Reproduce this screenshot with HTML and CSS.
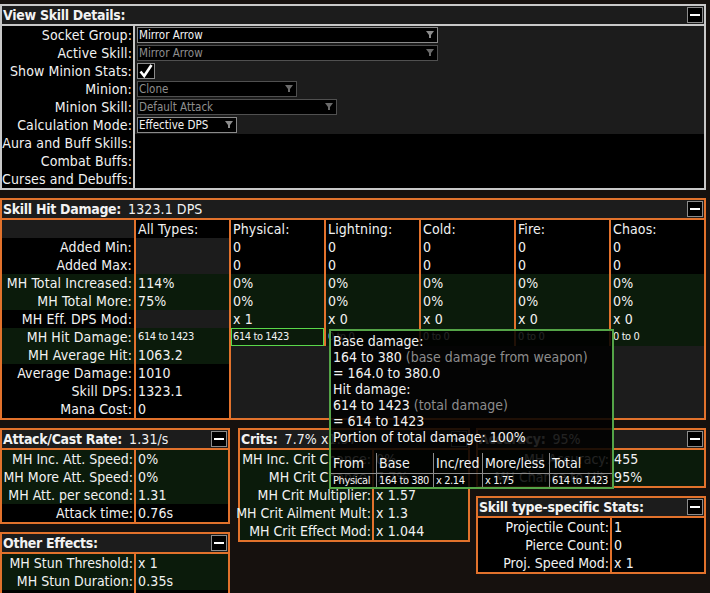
FILE: index.html
```html
<!DOCTYPE html>
<html>
<head>
<meta charset="utf-8">
<link rel="stylesheet" href="styles.css">
</head>
<body>
<div class="page">

  <section class="panel gray">
    <div class="phead"><span class="title">View Skill Details:</span><span class="minbtn"></span></div>
    <div class="form">
      <div class="fl">Socket Group:</div>
      <div class="fv"><div class="dd w301"><span>Mirror Arrow</span><svg class="arr" width="8" height="8" viewBox="0 0 8 8"><polygon points="0,0 8,0 5,4 5,7 3,7 3,4"/></svg></div></div>
      <div class="fl">Active Skill:</div>
      <div class="fv"><div class="dd w301 off"><span>Mirror Arrow</span><svg class="arr" width="8" height="8" viewBox="0 0 8 8"><polygon points="0,0 8,0 5,4 5,7 3,7 3,4"/></svg></div></div>
      <div class="fl">Show Minion Stats:</div>
      <div class="fv"><div class="cb"><svg width="16" height="14" viewBox="0 0 16 14"><path d="M2.5 7.5 L6.2 12 L13.5 1" fill="none" stroke="#fff" stroke-width="2.6"/></svg></div></div>
      <div class="fl">Minion:</div>
      <div class="fv"><div class="dd w160 off"><span>Clone</span><svg class="arr" width="8" height="8" viewBox="0 0 8 8"><polygon points="0,0 8,0 5,4 5,7 3,7 3,4"/></svg></div></div>
      <div class="fl">Minion Skill:</div>
      <div class="fv"><div class="dd w200 off"><span>Default Attack</span><svg class="arr" width="8" height="8" viewBox="0 0 8 8"><polygon points="0,0 8,0 5,4 5,7 3,7 3,4"/></svg></div></div>
      <div class="fl">Calculation Mode:</div>
      <div class="fv"><div class="dd w100"><span>Effective DPS</span><svg class="arr" width="8" height="8" viewBox="0 0 8 8"><polygon points="0,0 8,0 5,4 5,7 3,7 3,4"/></svg></div></div>
      <div class="fl">Aura and Buff Skills:</div>
      <div class="fv k"></div>
      <div class="fl">Combat Buffs:</div>
      <div class="fv k"></div>
      <div class="fl">Curses and Debuffs:</div>
      <div class="fv k"></div>
    </div>
  </section>

  <section class="panel orange mt8">
    <div class="phead"><span class="title">Skill Hit Damage:<span class="v">1323.1 DPS</span></span><span class="minbtn"></span></div>
    <div class="dmg">
      <div class="l s bd"></div><div class="k bd">All Types:</div><div class="k bd">Physical:</div><div class="k bd">Lightning:</div><div class="k bd">Cold:</div><div class="k bd">Fire:</div><div class="k">Chaos:</div>

      <div class="l k bd">Added Min:</div><div class="s bd"></div><div class="k bd">0</div><div class="k bd">0</div><div class="k bd">0</div><div class="k bd">0</div><div class="k">0</div>

      <div class="l k bd">Added Max:</div><div class="s bd"></div><div class="k bd">0</div><div class="k bd">0</div><div class="k bd">0</div><div class="k bd">0</div><div class="k">0</div>

      <div class="l g bd">MH Total Increased:</div><div class="g bd">114%</div><div class="g bd">0%</div><div class="g bd">0%</div><div class="g bd">0%</div><div class="g bd">0%</div><div class="g">0%</div>

      <div class="l g bd">MH Total More:</div><div class="g bd">75%</div><div class="g bd">0%</div><div class="g bd">0%</div><div class="g bd">0%</div><div class="g bd">0%</div><div class="g">0%</div>

      <div class="l k bd">MH Eff. DPS Mod:</div><div class="s bd"></div><div class="g bd">x 1</div><div class="g bd">x 0</div><div class="g bd">x 0</div><div class="g bd">x 0</div><div class="g">x 0</div>

      <div class="l g bd">MH Hit Damage:</div><div class="g bd sm">614 to 1423</div><div class="g bd sm hov">614 to 1423</div><div class="g bd sm">0 to 0</div><div class="g bd sm">0 to 0</div><div class="g bd sm">0 to 0</div><div class="g sm">0 to 0</div>

      <div class="l g bd">MH Average Hit:</div><div class="g bd">1063.2</div><div class="s rest"></div>
      <div class="l k bd">Average Damage:</div><div class="k bd">1010</div>
      <div class="l k bd">Skill DPS:</div><div class="k bd">1323.1</div>
      <div class="l k bd">Mana Cost:</div><div class="k bd">0</div>
    </div>
  </section>

  <div class="lower">
    <div class="col c1">
      <section class="panel orange">
        <div class="phead"><span class="title">Attack/Cast Rate:<span class="v">1.31/s</span></span><span class="minbtn"></span></div>
        <div class="mini">
          <div class="l g bd">MH Inc. Att. Speed:</div><div class="g">0%</div>
          <div class="l g bd">MH More Att. Speed:</div><div class="g">0%</div>
          <div class="l g bd">MH Att. per second:</div><div class="g">1.31</div>
          <div class="l k bd">Attack time:</div><div class="k">0.76s</div>
        </div>
      </section>
      <section class="panel orange">
        <div class="phead"><span class="title">Other Effects:</span><span class="minbtn"></span></div>
        <div class="mini">
          <div class="l g bd">MH Stun Threshold:</div><div class="g">x 1</div>
          <div class="l g bd">MH Stun Duration:</div><div class="g">0.35s</div>
          <div class="l k bd"></div><div class="k"></div>
        </div>
      </section>
    </div>

    <div class="col c2">
      <section class="panel orange">
        <div class="phead"><span class="title">Crits:<span class="v">7.7% x1.57</span></span><span class="minbtn"></span></div>
        <div class="mini">
          <div class="l g bd">MH Inc. Crit Chance:</div><div class="g">0%</div>
          <div class="l g bd">MH Crit Chance:</div><div class="g">7.7%</div>
          <div class="l g bd">MH Crit Multiplier:</div><div class="g">x 1.57</div>
          <div class="l g bd">MH Crit Ailment Mult:</div><div class="g">x 1.3</div>
          <div class="l g bd">MH Crit Effect Mod:</div><div class="g">x 1.044</div>
        </div>
      </section>
    </div>

    <div class="col c3">
      <section class="panel orange">
        <div class="phead"><span class="title">Accuracy:<span class="v">95%</span></span><span class="minbtn"></span></div>
        <div class="mini">
          <div class="l g bd">MH Accuracy:</div><div class="g">455</div>
          <div class="l g bd">MH Chance to Hit:</div><div class="g">95%</div>
        </div>
      </section>
      <section class="panel orange">
        <div class="phead"><span class="title">Skill type-specific Stats:</span><span class="minbtn"></span></div>
        <div class="mini">
          <div class="l k bd">Projectile Count:</div><div class="k">1</div>
          <div class="l k bd">Pierce Count:</div><div class="k">0</div>
          <div class="l k bd">Proj. Speed Mod:</div><div class="k">x 1</div>
        </div>
      </section>
    </div>
  </div>

  <div class="tip">
    <div class="tl">Base damage:</div>
    <div class="tl">164 to 380 <span class="dim">(base damage from weapon)</span></div>
    <div class="tl">= 164.0 to 380.0</div>
    <div class="tl">Hit damage:</div>
    <div class="tl">614 to 1423 <span class="dim">(total damage)</span></div>
    <div class="tl">= 614 to 1423</div>
    <div class="tl">Portion of total damage: 100%</div>
    <div class="tt">
      <div class="th">From</div><div class="th">Base</div><div class="th">Inc/red</div><div class="th">More/less</div><div class="th last">Total</div>
      <div class="td">Physical</div><div class="td">164 to 380</div><div class="td">x 2.14</div><div class="td">x 1.75</div><div class="td last">614 to 1423</div>
    </div>
  </div>

</div>
</body>
</html>
```

FILE: styles.css
```css
html, body {
  margin: 0;
  padding: 0;
  background: #16110e;
  overflow: hidden;
}
body {
  width: 710px;
  height: 593px;
  font-family: "DejaVu Sans Condensed", "DejaVu Sans", sans-serif;
  font-stretch: condensed;
  font-size: 14px;
  letter-spacing: 0.12px;
  color: #f2f2f2;
}
.page {
  position: relative;
  width: 706px;
  padding-top: 4px;
}
.panel {
  border: 2px solid #e2722c;
  background: #000;
}
.panel.gray { border-color: #c8c8c8; }
.mt8 { margin-top: 8px; }

.phead {
  height: 18px;
  display: flex;
  align-items: center;
  justify-content: space-between;
  background: #1c1c1c;
  border-bottom: 2px solid #e2722c;
  padding-left: 1px;
  overflow: hidden;
}
.gray .phead { border-bottom-color: #c8c8c8; }
.title {
  font-weight: bold;
  white-space: nowrap;
  line-height: 18px;
  letter-spacing: -0.3px;
}
.title .v {
  font-weight: normal;
  margin-left: 7px;
  letter-spacing: 0.1px;
}
.minbtn {
  flex: none;
  width: 16px;
  height: 16px;
  box-sizing: border-box;
  border: 1px solid #8c8c8c;
  background: #000;
  margin-right: 1px;
  display: flex;
  align-items: center;
  justify-content: center;
}
.minbtn::before {
  content: "";
  width: 10px;
  height: 2px;
  background: #fff;
}

/* View Skill Details form */
.form {
  display: grid;
  grid-template-columns: 133px 1fr;
  grid-auto-rows: 18px;
}
.fl {
  box-sizing: border-box;
  display: flex;
  justify-content: flex-end;
  padding-right: 1px;
  border-right: 2px solid #c8c8c8;
  line-height: 18px;
  background: #000;
  white-space: nowrap;
  overflow: hidden;
}
.fv {
  background: #1c1c1c;
  padding-left: 2px;
}
.fv.k { background: #000; }
.dd {
  margin-top: 1px;
  height: 16px;
  box-sizing: border-box;
  border: 1px solid #8a8a8a;
  background: #000;
  font-size: 11.5px;
  letter-spacing: 0;
  line-height: 14px;
  padding: 0 3px 0 1px;
  display: flex;
  align-items: center;
  justify-content: space-between;
  color: #f2f2f2;
}
.dd .arr { fill: #8c8c8c; flex: none; }
.dd.off { border-color: #505050; color: #8e8e8e; }
.dd.off .arr { fill: #6a6a6a; }
.w301 { width: 301px; }
.w160 { width: 160px; }
.w200 { width: 200px; }
.w100 { width: 100px; }
.cb {
  margin-top: 1px;
  width: 18px;
  height: 16px;
  box-sizing: border-box;
  border: 1px solid #8a8a8a;
  background: #000;
  display: flex;
  align-items: center;
  justify-content: center;
}

/* Damage table */
.dmg {
  display: grid;
  grid-template-columns: 134px 95px 95px 95px 95px 95px 93px;
  grid-auto-rows: 18px;
}
.dmg > div, .mini > div {
  box-sizing: border-box;
  line-height: 18px;
  white-space: nowrap;
  overflow: hidden;
  padding-left: 2px;
}
.dmg > .l, .mini > .l {
  display: flex;
  justify-content: flex-end;
  padding-left: 0;
  padding-right: 2px;
}
.mini > .l {
  letter-spacing: 0;
  padding-right: 1px;
  overflow: visible;
}
.bd { border-right: 2px solid #e2722c; }
.g { background: #0b1b0b; }
.k { background: #000; }
.s { background: #1c1c1c; }
.dmg > .sm {
  font-size: 11px;
  letter-spacing: -0.4px;
}
.hov { box-shadow: inset 0 0 0 1px #5ad84a; }
.dmg > .rest {
  grid-column: 3 / 8;
  grid-row: 8 / 12;
}

/* Lower panels */
.lower {
  display: flex;
  align-items: flex-start;
  margin-top: 8px;
}
.col {
  display: flex;
  flex-direction: column;
  gap: 8px;
}
.c1 { width: 230px; }
.c2 { width: 232px; margin-left: 8px; }
.c3 { width: 230px; margin-left: 6px; }
.mini {
  display: grid;
  grid-template-columns: 134px 1fr;
  grid-auto-rows: 18px;
}

/* Tooltip overlay */
.tip {
  position: absolute;
  left: 329px;
  top: 329px;
  width: 285px;
  box-sizing: border-box;
  border: 2px solid #54a447;
  background: rgba(0, 0, 0, 0.86);
  padding: 2px 0 0 2px;
  letter-spacing: 0;
}
.tl {
  line-height: 16px;
  white-space: nowrap;
}
.dim { color: #8c8c8c; }
.tt {
  margin-top: 8px;
  display: grid;
  grid-template-columns: 46px 57px 49px 67px 1fr;
  margin-left: -2px;
}
.th, .td {
  box-sizing: border-box;
  border-right: 1px solid #8c8c8c;
  padding-left: 2px;
  white-space: nowrap;
  overflow: hidden;
}
.th {
  height: 21px;
  line-height: 21px;
  border-bottom: 1px solid #8c8c8c;
}
.td {
  height: 13px;
  line-height: 13px;
  font-size: 11px;
  letter-spacing: -0.4px;
}
.th.last, .td.last { border-right: none; }
```
